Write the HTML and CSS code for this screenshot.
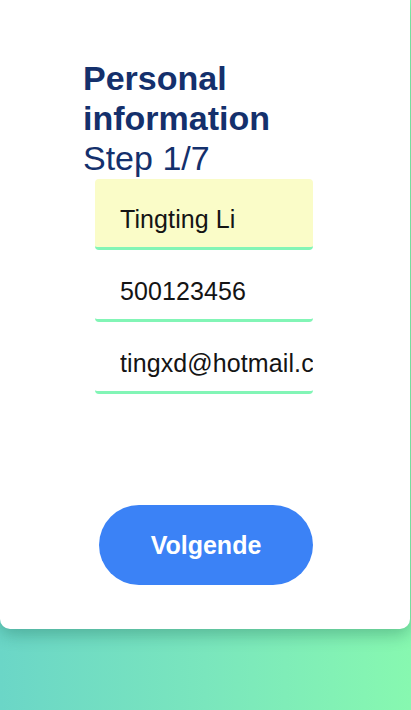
FILE: index.html
```html
<!DOCTYPE html>
<html lang="nl">
<head>
<meta charset="utf-8">
<meta name="viewport" content="width=device-width, initial-scale=1">
<title>Personal information</title>
<link rel="stylesheet" href="styles.css">
</head>
<body>
  <main class="card">
    <h1 class="title">
      <span class="title-main">Personal information</span>
      <span class="title-step">Step 1/7</span>
    </h1>
    <form class="form">
      <input class="field field-active" type="text" value="Tingting Li">
      <input class="field" type="text" value="500123456">
      <input class="field" type="email" value="tingxd@hotmail.com">
      <button class="next" type="button">Volgende</button>
    </form>
  </main>
</body>
</html>
```

FILE: styles.css
```css
* {
  box-sizing: border-box;
}

html,
body {
  margin: 0;
  height: 100%;
}

body {
  height: 710px;
  overflow: hidden;
  background: linear-gradient(to right, #6bd6c7 0%, #7ae6bd 50%, #87f8b0 100%);
  font-family: "Liberation Sans", Arial, sans-serif;
}

.card {
  width: 410px;
  height: 629px;
  background: #ffffff;
  border-radius: 0 0 10px 10px;
  box-shadow: 0 6px 16px rgba(20, 90, 70, 0.32);
  padding-top: 58px;
}

.title {
  margin: 0 0 0 83px;
  font-size: 34px;
  line-height: 40px;
  color: #14306c;
  width: 220px;
}

.title-main {
  display: block;
  font-weight: 700;
}

.title-step {
  display: block;
  font-weight: 400;
}

.form {
  display: flex;
  flex-direction: column;
  gap: 1px;
  margin: 1px 0 0 95px;
  width: 218px;
}

.field {
  display: block;
  width: 218px;
  height: 71px;
  margin: 0;
  padding: 26px 0 14px 25px;
  border: none;
  border-bottom: 3px solid #82f5b6;
  border-radius: 4px;
  background: #ffffff;
  font-family: "Liberation Sans", Arial, sans-serif;
  font-size: 25px;
  letter-spacing: 0.1px;
  line-height: 28px;
  color: #141414;
  outline: none;
}

.field-active {
  background: #fafcc8;
}

.next {
  margin: 110px 0 0 4px;
  width: 214px;
  height: 80px;
  border: none;
  border-radius: 40px;
  background: #3b82f6;
  color: #ffffff;
  font-family: "Liberation Sans", Arial, sans-serif;
  font-size: 25px;
  font-weight: 700;
  padding: 0;
}
```
